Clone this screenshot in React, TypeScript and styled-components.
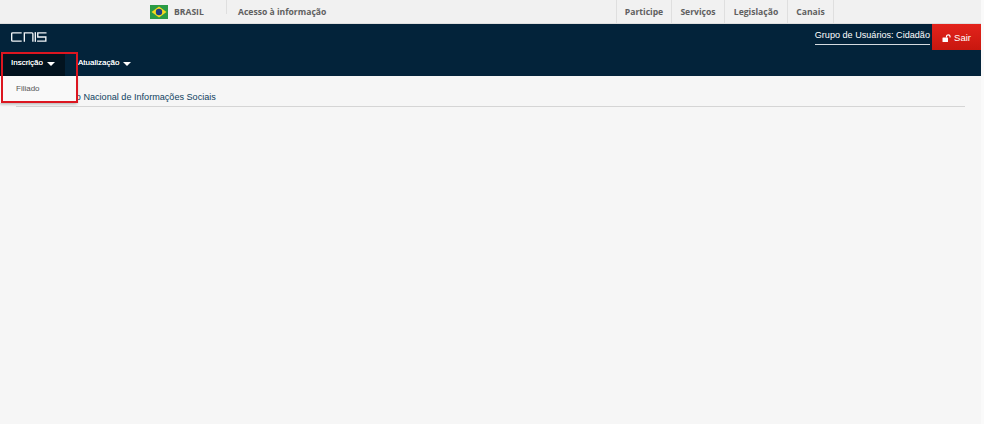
import React from 'react'
import styled, { createGlobalStyle } from 'styled-components'

const GlobalStyle = createGlobalStyle`
    html, body {
        margin: 0;
        padding: 0;
        background: #fafafa;
    }
`

const Page = styled.div`
    width: 981px;
    height: 424px;
    background-color: #f6f6f6;
    font-family: "Liberation Sans", Arial, sans-serif;
    position: relative;
    overflow: hidden;
`

const GovBar = styled.div`
    height: 23px;
    background-color: #f1f1f1;
    border-bottom: 1px solid #dfdfdf;
    display: flex;
    justify-content: space-between;
    padding: 0 147px 0 150px;
    font-family: "Open Sans", sans-serif;
    font-size: 8.6px;
    font-weight: 700;
    color: #606060;
`

const GovGroup = styled.div`
    display: flex;
    align-items: center;
`

const Country = styled.div`
    display: flex;
    align-items: center;
    gap: 6px;
    width: 76px;
`

const GovDivider = styled.div`
    align-self: flex-start;
    width: 1px;
    height: 14px;
    background-color: #dfdfdf;
`

const GovLink = styled.span`
    padding: 0 11px;
`

const GovTab = styled.span<{ $width: number }>`
    height: 100%;
    width: ${p => p.$width}px;
    box-sizing: border-box;
    display: flex;
    align-items: center;
    justify-content: center;
    border-left: 1px solid #dfdfdf;
    &:last-child {
        border-right: 1px solid #dfdfdf;
    }
`

const Header = styled.div`
    height: 52px;
    background-color: #03233a;
    display: flex;
    justify-content: space-between;
`

const HeaderLeft = styled.div`
    display: flex;
    flex-direction: column;
`

const Logo = styled.div`
    display: flex;
    height: 28px;
    padding: 8px 0 0 11px;
    box-sizing: border-box;
`

const Menu = styled.div`
    display: flex;
    height: 24px;
`

const MenuItem = styled.div<{ $open?: boolean }>`
    display: flex;
    align-items: center;
    gap: 4px;
    color: #fff;
    font-size: 8px;
    padding-bottom: 3px;
    box-sizing: border-box;
    text-shadow: 0 0 0.4px rgba(255, 255, 255, 0.8);
    width: ${p => (p.$open ? '65px' : 'auto')};
    padding-left: ${p => (p.$open ? '11px' : '13px')};
    background-color: ${p => (p.$open ? '#02131f' : 'transparent')};
`

const Caret = styled.span`
    width: 0;
    height: 0;
    margin-top: 2px;
    border-left: 4px solid transparent;
    border-right: 4px solid transparent;
    border-top: 4px solid #fff;
`

const HeaderRight = styled.div`
    display: flex;
    align-items: flex-start;
`

const UserGroup = styled.div`
    color: #fff;
    font-size: 9.1px;
    height: 20px;
    line-height: 23px;
    margin-right: 2px;
    border-bottom: 1px solid #d5dbe0;
`

const Logout = styled.div`
    width: 49px;
    height: 26px;
    background: linear-gradient(#e3231c, #c8170f);
    color: #fff;
    font-size: 9.5px;
    padding-top: 1px;
    box-sizing: border-box;
    display: flex;
    align-items: center;
    justify-content: center;
    gap: 3px;
`

const Content = styled.div`
    padding: 15px 16px 0 16px;
`

const Title = styled.div`
    color: #0f3f60;
    font-size: 9.1px;
    line-height: 12px;
    padding: 0 0 3px 28px;
    border-bottom: 1px solid #d5d5d5;
`

const Dropdown = styled.div`
    position: absolute;
    left: 0;
    top: 76px;
    width: 77px;
    height: 27px;
    background-color: #f9f9f9;
    box-shadow: 0 1px 3px rgba(0, 0, 0, 0.3);
    color: #555;
    font-size: 8px;
    line-height: 25px;
    padding-left: 16px;
    box-sizing: border-box;
`

const Highlight = styled.div`
    position: absolute;
    left: 1px;
    top: 52px;
    width: 77px;
    height: 51px;
    border: 2px solid #dc1620;
    box-sizing: border-box;
`

const Flag = () => (
    <svg width="18" height="14" viewBox="0 0 18 14">
        <rect width="18" height="14" fill="#2a9b45" />
        <polygon points="9,1.5 16.5,7 9,12.5 1.5,7" fill="#f4d91f" />
        <circle cx="9" cy="7" r="3.2" fill="#1f3f86" />
    </svg>
)

const LogoMark = () => (
    <svg width="36" height="10" viewBox="0 0 37 10" fill="none" stroke="#f2f5f7" strokeWidth="1.4">
        <path d="M11 0.7H1.700Q0.700 0.700 0.700 1.700V8.300Q0.700 9.300 1.700 9.300H11" />
        <path d="M13.700 10V0.700H21.500Q22.500 0.700 22.500 1.700V10" />
        <path d="M25 0V10" />
        <path d="M36.500 0.700H27.500V5H35.800V9.300H26.800" />
    </svg>
)

const Unlock = () => (
    <svg width="9" height="8" viewBox="0 0 9 8">
        <rect x="0.500" y="3.500" width="5.500" height="4.500" rx="0.500" fill="#fff" />
        <path d="M4.500 3.500V2.200C4.500 0.500 8 0.500 8 2.200V3.500" fill="none" stroke="#fff" strokeWidth="1.200" />
    </svg>
)

const App = () => {
    return (
        <Page>
            <GlobalStyle />
            <GovBar>
                <GovGroup>
                    <Country>
                        <Flag />
                        <span>BRASIL</span>
                    </Country>
                    <GovDivider />
                    <GovLink>Acesso à informação</GovLink>
                </GovGroup>
                <GovGroup>
                    <GovTab $width={55}>Participe</GovTab>
                    <GovTab $width={53}>Serviços</GovTab>
                    <GovTab $width={63}>Legislação</GovTab>
                    <GovTab $width={47}>Canais</GovTab>
                </GovGroup>
            </GovBar>
            <Header>
                <HeaderLeft>
                    <Logo><LogoMark /></Logo>
                    <Menu>
                        <MenuItem $open>Inscrição <Caret /></MenuItem>
                        <MenuItem>Atualização <Caret /></MenuItem>
                    </Menu>
                </HeaderLeft>
                <HeaderRight>
                    <UserGroup>Grupo de Usuários: Cidadão</UserGroup>
                    <Logout><Unlock /> Sair</Logout>
                </HeaderRight>
            </Header>
            <Content>
                <Title>Cadastro Nacional de Informações Sociais</Title>
            </Content>
            <Dropdown>Filiado</Dropdown>
            <Highlight />
        </Page>
    )
}

export default App
